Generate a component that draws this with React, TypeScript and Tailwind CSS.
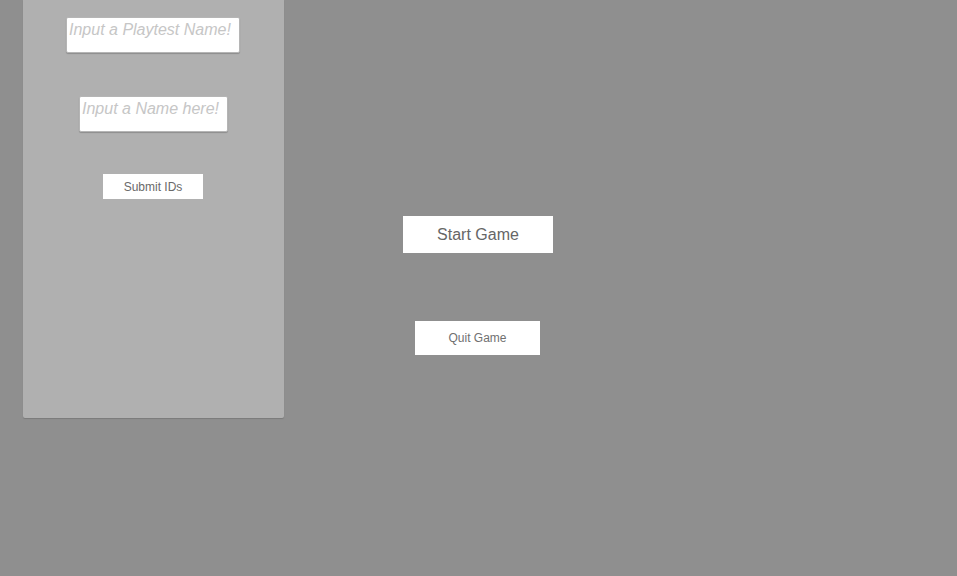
import { useState } from "react";

export default function App() {
  const [playtest, setPlaytest] = useState("");
  const [name, setName] = useState("");

  return (
    <div
      className="grid h-[576px] w-[957px] overflow-hidden bg-[#8f8f8f]"
      style={{ fontFamily: '"Liberation Sans", Arial, sans-serif' }}
    >
      {/* left panel */}
      <div className="col-start-1 row-start-1 ml-[23px] flex h-[418px] w-[261px] flex-col items-center self-start rounded-b-[2px] bg-[#b0b0b0] shadow-[0_1px_1px_rgba(0,0,0,0.15)]">
        <input
          value={playtest}
          onChange={(e) => setPlaytest(e.target.value)}
          placeholder="Input a Playtest Name!"
          className="mt-[17px] mr-[1px] h-[36px] w-[174px] rounded-[2px] border border-[#b5b5b5] bg-white px-[2px] pt-[3px] pb-[13px] text-[16px] italic text-[#555] shadow-[0_1px_1px_rgba(0,0,0,0.2)] outline-none placeholder:text-[#c6c6c6]"
        />
        <input
          value={name}
          onChange={(e) => setName(e.target.value)}
          placeholder="Input a Name here!"
          className="mt-[43px] h-[36px] w-[149px] rounded-[2px] border border-[#b5b5b5] bg-white px-[2px] pt-[3px] pb-[13px] text-[16px] italic text-[#555] shadow-[0_1px_1px_rgba(0,0,0,0.2)] outline-none placeholder:text-[#c6c6c6]"
        />
        <button className="mt-[42px] mr-[1px] h-[25px] w-[100px] bg-white text-[12px] text-[#6a6a6a]">
          Submit IDs
        </button>
      </div>

      {/* center menu */}
      <div className="col-start-1 row-start-1 mr-[1px] flex flex-col items-center pt-[216px]">
        <button className="h-[37px] w-[150px] bg-white text-[16px] text-[#666]">
          Start Game
        </button>
        <button className="mt-[68px] mr-[1px] h-[34px] w-[125px] bg-white text-[12px] text-[#707070]">
          Quit Game
        </button>
      </div>
    </div>
  );
}
